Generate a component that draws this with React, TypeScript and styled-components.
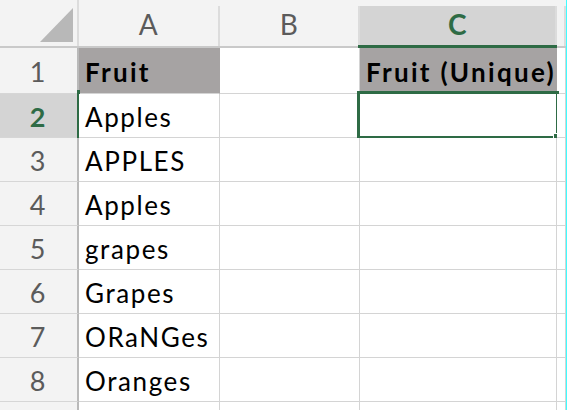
import * as React from "react"
import styled, { createGlobalStyle } from "styled-components"

const GlobalStyle = createGlobalStyle`
  html, body {
    margin: 0;
    padding: 0;
    background: #ffffff;
  }
  * {
    box-sizing: border-box;
  }
`

const GREEN = "#2e6b45"
const COLS = "79px 141px 140px 197px 1fr"

const Sheet = styled.div`
  width: 567px;
  height: 410px;
  overflow: hidden;
  background: #ffffff;
  border-right: 1px solid #3ffcff;
  font-family: "Lato", "Open Sans", sans-serif;
  display: flex;
  flex-direction: column;
`

const HeaderRow = styled.div`
  display: grid;
  grid-template-columns: ${COLS};
  height: 48px;
  flex: none;
  padding-top: 6px;
  background: #f3f3f3;
  border-bottom: 2px solid #c9c9c9;
`

const Corner = styled.div`
  position: relative;
  margin-top: -6px;
  border-right: 2px solid #dcdcdc;
`

const CornerTriangle = styled.svg`
  position: absolute;
  left: 40px;
  top: 8px;
`

const ColHeader = styled.div<{ $active?: boolean }>`
  position: relative;
  display: flex;
  align-items: center;
  justify-content: center;
  font-size: 28px;
  letter-spacing: 0.5px;
  font-weight: ${p => (p.$active ? 700 : 400)};
  color: ${p => (p.$active ? GREEN : "#5b5b5b")};
  background: ${p => (p.$active ? "#d4d4d4" : "transparent")};
  border-right: 2px solid #dcdcdc;
  padding-bottom: 4px;

  ${p =>
    p.$active &&
    `
    &::after {
      content: "";
      position: absolute;
      left: -2px;
      right: -2px;
      bottom: -2px;
      height: 3px;
      background: ${GREEN};
    }
  `}
`

const Row = styled.div<{ $h: number }>`
  display: grid;
  grid-template-columns: ${COLS};
  height: ${p => p.$h}px;
  flex: none;
`

const RowHeader = styled.div<{ $active?: boolean }>`
  position: relative;
  display: flex;
  align-items: center;
  justify-content: center;
  padding: 2px 2px 0 0;
  font-size: 27px;
  font-weight: ${p => (p.$active ? 700 : 400)};
  color: ${p => (p.$active ? GREEN : "#5b5b5b")};
  background: ${p => (p.$active ? "#d4d4d4" : "#f3f3f3")};
  border-right: 2px solid #b9b9b9;
  border-bottom: 1px solid #d6d6d6;

  ${p =>
    p.$active &&
    `
    &::after {
      content: "";
      position: absolute;
      right: -3px;
      top: -4px;
      bottom: -3px;
      width: 3px;
      background: ${GREEN};
    }
  `}
`

const Cell = styled.div<{ $fill?: boolean; $bold?: boolean }>`
  position: relative;
  display: flex;
  align-items: center;
  padding: 3px 0 0 6px;
  white-space: nowrap;
  font-size: 26px;
  letter-spacing: ${p => (p.$bold ? "2.3px" : "1.6px")};
  font-weight: ${p => (p.$bold ? 700 : 400)};
  color: #000000;
  background: ${p => (p.$fill ? "#a6a3a3" : "#ffffff")};
  border-right: 1px solid ${p => (p.$fill ? "#a6a3a3" : "#d4d4d4")};
  border-bottom: 1px solid #d4d4d4;
`

const Selection = styled.div`
  position: absolute;
  left: -3px;
  top: -3px;
  right: -3px;
  bottom: -2px;
  border: 3px solid ${GREEN};
  pointer-events: none;
`

const Handle = styled.div`
  position: absolute;
  right: -6px;
  bottom: -6px;
  width: 9px;
  height: 9px;
  background: ${GREEN};
  border: 1px solid #ffffff;
`

const columns = ["A", "B", "C", ""]

const colA = ["Fruit", "Apples", "APPLES", "Apples", "grapes", "Grapes", "ORaNGes", "Oranges", ""]

export default function App() {
  return (
    <>
      <GlobalStyle />
      <Sheet>
        <HeaderRow>
          <Corner>
            <CornerTriangle width="33" height="34" viewBox="0 0 33 34">
              <polygon points="33,0 33,34 0,34" fill="#b8b8b8" />
            </CornerTriangle>
          </Corner>
          {columns.map(c => (
            <ColHeader key={c || "d"} $active={c === "C"}>
              {c}
            </ColHeader>
          ))}
        </HeaderRow>
        {colA.map((text, i) => {
          const n = i + 1
          return (
            <Row key={n} $h={n === 1 ? 46 : 44}>
              {/* row 9 is only a sliver at the bottom edge, so no number */}
              <RowHeader $active={n === 2}>{n < 9 ? n : ""}</RowHeader>
              <Cell $fill={n === 1} $bold={n === 1}>
                {text}
              </Cell>
              <Cell />
              <Cell $fill={n === 1} $bold={n === 1}>
                {n === 1 ? "Fruit (Unique)" : ""}
                {n === 2 && (
                  <Selection>
                    <Handle />
                  </Selection>
                )}
              </Cell>
              <Cell />
            </Row>
          )
        })}
      </Sheet>
    </>
  )
}
